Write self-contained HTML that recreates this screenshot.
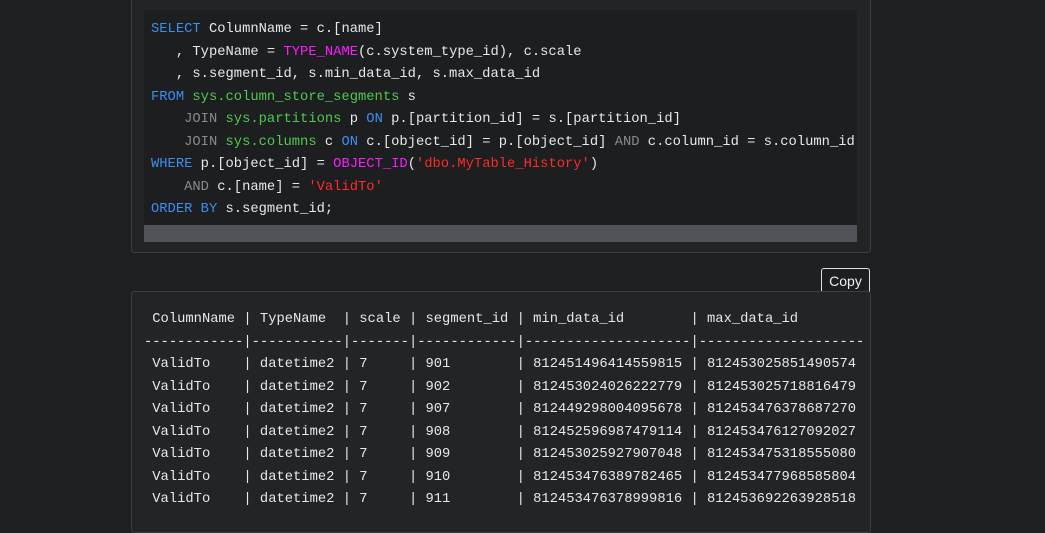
<!DOCTYPE html>
<html><head><style>
body{margin:0;width:1045px;height:513px;background:#1e1f21;overflow:hidden;position:relative;font-family:"Liberation Mono",monospace;}
.box{position:absolute;left:131px;width:738px;background:#222426;border:1px solid #3b3e41;border-radius:3px;}
pre{margin:0;font-family:"Liberation Mono",monospace;font-size:13.8px;line-height:22.5px;color:#e8e8e8;white-space:pre;}
.k{color:#3c8ef0}.f{color:#ff1aff}.g{color:#4fc94f}.s{color:#ff2a2a}.a{color:#8a8a8a}
</style></head><body>
<div class="box" style="top:-3px;height:254px;">
  <div style="position:absolute;left:12px;top:12px;width:713px;height:232px;background:#1c1e20;overflow:hidden;">
    <pre style="position:absolute;left:7px;top:9px;"><span class="k">SELECT</span> ColumnName = c.[name]
   , TypeName = <span class="f">TYPE_NAME</span>(c.system_type_id), c.scale
   , s.segment_id, s.min_data_id, s.max_data_id
<span class="k">FROM</span> <span class="g">sys.column_store_segments</span> s
    <span class="a">JOIN</span> <span class="g">sys.partitions</span> p <span class="k">ON</span> p.[partition_id] = s.[partition_id]
    <span class="a">JOIN</span> <span class="g">sys.columns</span> c <span class="k">ON</span> c.[object_id] = p.[object_id] <span class="a">AND</span> c.column_id = s.column_id
<span class="k">WHERE</span> p.[object_id] = <span class="f">OBJECT_ID</span>(<span class="s">'dbo.MyTable_History'</span>)
    <span class="a">AND</span> c.[name] = <span class="s">'ValidTo'</span>
<span class="k">ORDER BY</span> s.segment_id;</pre>
    <div style="position:absolute;left:0;top:215px;width:713px;height:17px;background:#505458;"></div>
  </div>
</div>
<div style="position:absolute;left:821px;top:268px;width:47px;height:24px;border:1px solid #e0e0e0;border-bottom:none;border-radius:3px 3px 0 0;background:#1c1e20;color:#f0f0f0;font-family:'Liberation Sans',sans-serif;font-size:14px;text-align:center;line-height:24px;">Copy</div>
<div class="box" style="top:291px;height:240px;overflow:hidden;">
  <pre style="position:absolute;left:12px;top:17px;color:#e8e8e8;"> ColumnName | TypeName  | scale | segment_id | min_data_id        | max_data_id
------------|-----------|-------|------------|--------------------|--------------------
 ValidTo    | datetime2 | 7     | 901        | 812451496414559815 | 812453025851490574
 ValidTo    | datetime2 | 7     | 902        | 812453024026222779 | 812453025718816479
 ValidTo    | datetime2 | 7     | 907        | 812449298004095678 | 812453476378687270
 ValidTo    | datetime2 | 7     | 908        | 812452596987479114 | 812453476127092027
 ValidTo    | datetime2 | 7     | 909        | 812453025927907048 | 812453475318555080
 ValidTo    | datetime2 | 7     | 910        | 812453476389782465 | 812453477968585804
 ValidTo    | datetime2 | 7     | 911        | 812453476378999816 | 812453692263928518</pre>
</div>
</body></html>
